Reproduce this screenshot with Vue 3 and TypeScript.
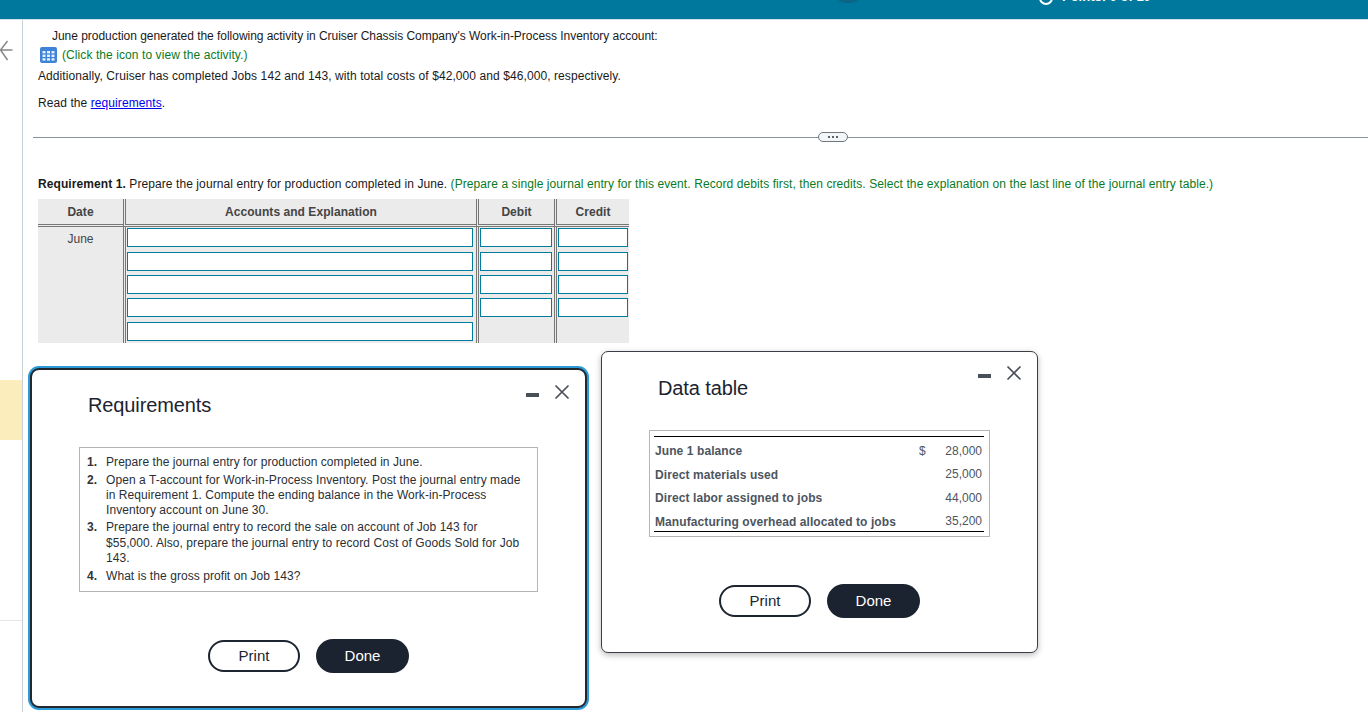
<script setup lang="ts">
const rows = [
  { label: 'June 1 balance', cur: '$', val: '28,000' },
  { label: 'Direct materials used', cur: '', val: '25,000' },
  { label: 'Direct labor assigned to jobs', cur: '', val: '44,000' },
  { label: 'Manufacturing overhead allocated to jobs', cur: '', val: '35,200' },
]
const reqs = [
  'Prepare the journal entry for production completed in June.',
  'Open a T-account for Work-in-Process Inventory. Post the journal entry made in Requirement 1. Compute the ending balance in the Work-in-Process Inventory account on June 30.',
  'Prepare the journal entry to record the sale on account of Job 143 for $55,000. Also, prepare the journal entry to record Cost of Goods Sold for Job 143.',
  'What is the gross profit on Job 143?',
]
const lines = [true, true, true, true, false]
</script>

<template>
  <div class="page">
    <header class="topbar">
      <span class="avatar"></span>
      <span class="ring"></span>
      <span class="points">Points: 0 of 10</span>
    </header>
    <div class="body">
      <aside class="rail">
        <svg class="back" width="14" height="22" viewBox="0 0 14 22">
          <path d="M7.5 1 L0.5 10 L7.5 20 M0.5 10 H12.5" fill="none" stroke="#85888a" stroke-width="1.5" />
        </svg>
        <div class="flag"></div>
        <div class="tick"></div>
      </aside>
      <main class="content">
        <div class="intro">
          <p class="l1">June production generated the following activity in Cruiser Chassis Company's Work-in-Process Inventory account:</p>
          <p class="l2">
            <svg class="grid-icon" width="17" height="16" viewBox="0 0 17 16">
              <rect x="0" y="0" width="17" height="16" rx="2" fill="#3f83d6" />
              <g fill="#e6effb">
                <rect x="2.5" y="4" width="3" height="2.4" /><rect x="7" y="4" width="3" height="2.4" /><rect x="11.5" y="4" width="3" height="2.4" />
                <rect x="2.5" y="7.6" width="3" height="2.4" /><rect x="7" y="7.6" width="3" height="2.4" /><rect x="11.5" y="7.6" width="3" height="2.4" />
                <rect x="2.5" y="11.2" width="3" height="2.4" /><rect x="7" y="11.2" width="3" height="2.4" /><rect x="11.5" y="11.2" width="3" height="2.4" />
              </g>
            </svg>
            <span class="green">(Click the icon to view the activity.)</span>
          </p>
          <p class="l3">Additionally, Cruiser has completed Jobs 142 and 143, with total costs of $42,000 and $46,000, respectively.</p>
          <p class="l4">Read the <a class="link">requirements</a>.</p>
        </div>
        <div class="divider"><span class="pill"><i></i><i></i><i></i></span></div>
        <p class="req-line"><b>Requirement 1.</b> Prepare the journal entry for production completed in June. <span class="green">(Prepare a single journal entry for this event. Record debits first, then credits. Select the explanation on the last line of the journal entry table.)</span></p>
        <div class="journal">
          <div class="jh date">Date</div>
          <div class="jh acct">Accounts and Explanation</div>
          <div class="jh deb">Debit</div>
          <div class="jh cred">Credit</div>
          <div class="jdate">June</div>
          <div class="jcol acct"><span v-for="(_, i) in lines" :key="i" class="box"></span></div>
          <div class="jcol deb"><template v-for="(l, i) in lines" :key="i"><span v-if="l" class="box"></span></template></div>
          <div class="jcol cred"><template v-for="(l, i) in lines" :key="i"><span v-if="l" class="box"></span></template></div>
        </div>
      </main>
    </div>

    <section class="win req-win">
      <h2 class="req-title">Requirements</h2>
      <div class="controls req-controls"><span class="min"></span>
        <svg width="16" height="16" viewBox="0 0 16 16"><path d="M1.5 1.5 L14.5 14.5 M14.5 1.5 L1.5 14.5" stroke="#4a5058" stroke-width="1.7" fill="none" /></svg>
      </div>
      <ol class="req-box">
        <li v-for="(r, i) in reqs" :key="i"><b>{{ i + 1 }}.</b><span>{{ r }}</span></li>
      </ol>
      <div class="btns"><button class="print">Print</button><button class="done">Done</button></div>
    </section>

    <section class="win data-win">
      <h2 class="data-title">Data table</h2>
      <div class="controls data-controls"><span class="min"></span>
        <svg width="16" height="16" viewBox="0 0 16 16"><path d="M1.5 1.5 L14.5 14.5 M14.5 1.5 L1.5 14.5" stroke="#4a5058" stroke-width="1.7" fill="none" /></svg>
      </div>
      <div class="data-box">
        <div class="data-inner">
          <div v-for="r in rows" :key="r.label" class="drow">
            <span class="dlabel">{{ r.label }}</span><span class="dcur">{{ r.cur }}</span><span class="dval">{{ r.val }}</span>
          </div>
        </div>
      </div>
      <div class="btns"><button class="print">Print</button><button class="done">Done</button></div>
    </section>
  </div>
</template>

<style>
html, body { margin: 0; background: #fff; overflow: hidden; }
</style>

<style scoped>
.page { position: relative; width: 1368px; height: 712px; overflow: hidden; font-family: "Liberation Sans", Arial, sans-serif; font-size: 12px; color: #1a1a1a; background: #fff; }
p { margin: 0; }
.topbar { position: relative; height: 19px; background: #00789e; border-bottom: 1px solid #cfe0ea; overflow: hidden; }
.avatar { position: absolute; left: 828px; top: -37px; width: 40px; height: 40px; border-radius: 50%; background: #0b6585; }
.ring { position: absolute; left: 1039px; top: -9px; width: 10px; height: 10px; border-radius: 50%; border: 2px solid #fff; }
.points { position: absolute; left: 1062px; top: -10px; font-size: 13px; font-weight: 700; color: #fff; line-height: 14px; white-space: nowrap; }
.body { display: flex; height: 692px; }
.rail { position: relative; flex: none; width: 22px; border-right: 1px solid #c9d0d8; }
.back { position: absolute; left: 0; top: 20px; }
.flag { position: absolute; left: 0; top: 360px; width: 22px; height: 60px; background: #fbeebc; }
.tick { position: absolute; left: 0; top: 600px; width: 22px; height: 1px; background: #e6e6e6; }
.content { flex: 1; min-width: 0; }
.intro { padding: 8px 0 0 15px; }
.l1 { padding-left: 14px; line-height: 16px; letter-spacing: -0.036px; }
.l2 { display: flex; align-items: center; gap: 5px; margin-top: 3px; line-height: 16px; padding-left: 2px; letter-spacing: 0.08px; }
.l3 { margin-top: 5px; line-height: 16px; letter-spacing: 0.083px; }
.l4 { margin-top: 11px; line-height: 16px; letter-spacing: 0.08px; }
.green { color: #0a7a24; }
.link { color: #0000ee; text-decoration: underline; }
.divider { position: relative; margin: 26px 0 0 10px; height: 1px; background: #8a9299; }
.pill { position: absolute; left: 785px; top: -5px; box-sizing: border-box; width: 30px; height: 10px; display: flex; align-items: center; justify-content: center; gap: 2px; background: #f3f5f7; border: 1px solid #6e7780; border-radius: 5px; }
.pill i { width: 2px; height: 2px; background: #5a636b; }
.req-line { margin: 38px 0 0 15px; line-height: 16px; white-space: nowrap; letter-spacing: 0.085px; }
.journal { display: grid; margin: 7px 0 0 15px; width: 591px; grid-template-columns: 85px 353px 78px 75px; grid-template-rows: 28px 116px; background: #ebebeb; color: #444; letter-spacing: 0.05px; }
.jh { display: flex; align-items: center; justify-content: center; font-weight: 700; border-bottom: 3px double #777; box-sizing: border-box; }
.jh.acct, .jh.deb, .jh.cred, .jcol { border-left: 3px double #777; }
.jdate { text-align: center; padding-top: 4px; line-height: 16px; }
.jcol { display: grid; grid-template-rows: 24px 23px 23px 24px 19px; padding-top: 1px; box-sizing: border-box; }
.box { display: block; box-sizing: border-box; height: 19px; background: #fff; border: 1px solid #007c9f; }
.jcol.acct .box { margin: 0 3px 0 1px; }
.jcol.deb .box { margin: 0 2px 0 1px; }
.jcol.cred .box { margin: 0 1px 0 1px; }

.win { position: absolute; box-sizing: border-box; background: #fff; }
.req-win { left: 30px; top: 368px; width: 557px; height: 340px; border: 2px solid #23282e; border-radius: 9px; box-shadow: 0 0 0 2px #2b9bd8; }
.data-win { left: 601px; top: 351px; width: 437px; height: 302px; border: 1px solid #3a3f45; border-radius: 7px; box-shadow: 0 2px 6px rgba(0,0,0,.28); }
h2 { margin: 0; font-weight: 400; font-size: 20px; line-height: 24px; color: #1b2430; position: absolute; letter-spacing: -0.12px; }
.req-title { left: 56px; top: 23px; }
.data-title { left: 56px; top: 24px; }
.controls { position: absolute; display: flex; align-items: center; gap: 15px; }
.req-controls { left: 494px; top: 14px; }
.data-controls { left: 376px; top: 13px; }
.min { display: block; width: 13px; height: 4px; background: #4a5058; margin-top: 5px; }
.req-box { position: absolute; left: 47px; top: 77px; box-sizing: border-box; width: 459px; height: 145px; margin: 0; padding: 7px 7px; list-style: none; border: 1px solid #b5b5b5; letter-spacing: 0.065px; }
.req-box li { display: flex; line-height: 15.2px; margin-bottom: 2.3px; color: #2a2f36; }
.req-box li:last-child { margin-top: 3px; }
.req-box b { flex: none; width: 19px; color: #333; }
.req-box span { width: 418px; }
.btns { position: absolute; display: flex; align-items: center; gap: 16px; }
.req-win .btns { left: 176px; top: 269px; }
.data-win .btns { left: 117px; top: 232px; }
button { box-sizing: border-box; font-family: inherit; font-size: 15px; border-radius: 17px; cursor: pointer; padding: 0 0 2px; }
.print { width: 92px; height: 32px; background: #fff; color: #1c2530; border: 2px solid #1c2530; }
.done { width: 93px; height: 34px; background: #1c2330; color: #fff; border: 0; }
.data-box { position: absolute; left: 47px; top: 78px; box-sizing: border-box; width: 341px; height: 107px; border: 1px solid #b5b5b5; padding: 5px 5px 5px 4px; }
.data-inner { border-top: 1px solid #000; border-bottom: 1px solid #000; height: 96px; box-sizing: border-box; padding-top: 2.4px; }
.drow { display: flex; height: 23.5px; align-items: center; color: #4d5560; }
.dlabel { flex: none; width: 265px; padding-left: 1px; box-sizing: border-box; font-weight: 700; font-size: 12px; letter-spacing: 0.09px; }
.dcur { flex: none; width: 25px; padding-bottom: 1px; }
.dval { flex: none; width: 38px; text-align: right; padding-bottom: 1px; }
</style>
